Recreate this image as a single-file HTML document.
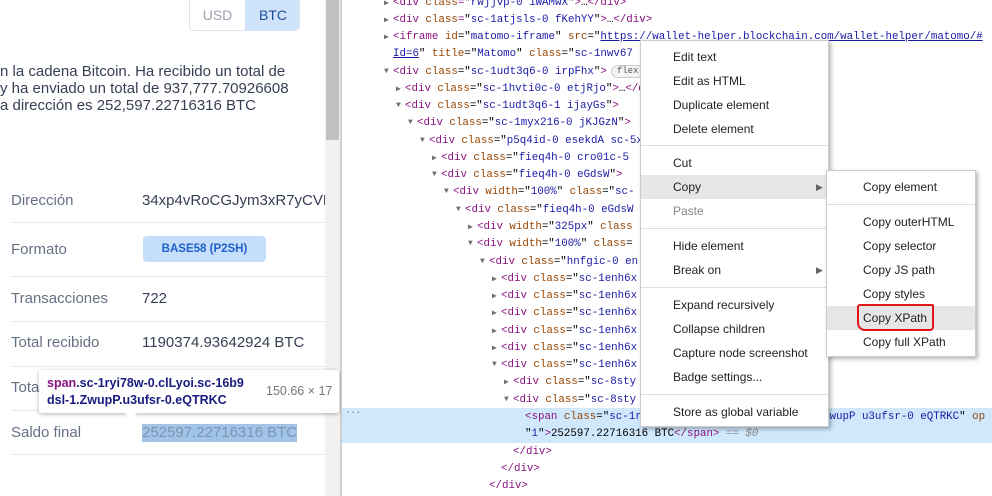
<!DOCTYPE html>
<html><head><meta charset="utf-8"><style>
*{margin:0;padding:0;box-sizing:border-box}
body{width:992px;height:496px;overflow:hidden;background:#fff;position:relative;font-family:"Liberation Sans",sans-serif}
.a{position:absolute}
.lp{color:#353f52;font-size:15px;white-space:nowrap}
.lbl{color:#677184;font-size:15px;position:absolute;left:11px}
.val{color:#353f52;font-size:15px;position:absolute;left:142px;white-space:nowrap}
.hr{position:absolute;left:11px;width:314px;height:1px;background:#e6e8eb}
#dt{position:absolute;left:342px;top:0;width:650px;height:496px;overflow:hidden;font-family:"Liberation Mono",monospace;font-size:10.8px}
.l{position:absolute;white-space:nowrap;height:17px;line-height:17px}
.t{color:#881280}.n{color:#994500}.v{color:#1a1aa6}
.ar{position:absolute;color:#6e6e6e;font-size:8px}
.menu{position:absolute;background:#fff;border:1px solid #ccc;box-shadow:2px 2px 4px rgba(0,0,0,.3);font-family:"Liberation Sans",sans-serif;font-size:12px;color:#222}
.mi{position:absolute;left:0;right:0;height:24px;line-height:24px;white-space:nowrap}
.sep{position:absolute;left:0;right:0;height:1px;background:#ddd}
.flex{display:inline-block;border:1px solid #ccc;border-radius:8px;background:#f3f3f3;color:#555;font-size:9px;padding:0 5px;line-height:11px;margin-left:4px;vertical-align:1px}
</style></head><body>
<!-- left panel -->
<div class="a" style="left:0;top:0;width:325px;height:496px;overflow:hidden">
<div class="a" style="left:189px;top:0;width:111px;height:31px;border:1px solid #dde3ea;border-top:none;border-radius:0 0 5px 5px;overflow:hidden">
 <div class="a" style="left:0;top:0;width:55px;height:31px;color:#98a1ad;font-size:14px;text-align:center;line-height:30px">USD</div>
 <div class="a" style="left:55px;top:0;width:56px;height:31px;background:#cfe3fb;color:#1f4f9c;font-size:14px;text-align:center;line-height:30px">BTC</div>
</div>
<div class="a lp" style="left:0;top:63px;line-height:17px">n la cadena Bitcoin. Ha recibido un total de<br>y ha enviado un total de 937,777.70926608<br>a dirección es 252,597.22716316 BTC</div>
<div class="lbl" style="top:192px">Dirección</div><div class="val" style="top:192px">34xp4vRoCGJym3xR7yCVP</div>
<div class="hr" style="top:222px"></div>
<div class="lbl" style="top:241px">Formato</div>
<div class="a" style="left:143px;top:236px;width:123px;height:26px;background:#c4defb;border-radius:4px;color:#1f5fc9;font-weight:bold;font-size:11.5px;text-align:center;line-height:26px">BASE58 (P2SH)</div>
<div class="hr" style="top:276px"></div>
<div class="lbl" style="top:290px">Transacciones</div><div class="val" style="top:290px">722</div>
<div class="hr" style="top:321px"></div>
<div class="lbl" style="top:334px">Total recibido</div><div class="val" style="top:334px">1190374.93642924 BTC</div>
<div class="hr" style="top:366px"></div>
<div class="lbl" style="top:379px">Total enviado</div>
<div class="hr" style="top:410px"></div>
<div class="lbl" style="top:424px">Saldo final</div>
<div class="a" style="left:142px;top:424px;height:18px;background:#9fc4e7;color:#7f93ad;font-size:15px;line-height:18px;white-space:nowrap">252597.22716316 BTC</div>
<div class="hr" style="top:454px"></div>
</div>
<!-- scrollbar -->
<div class="a" style="left:325px;top:0;width:15px;height:496px;background:#f1f1f1"></div>
<div class="a" style="left:326px;top:0;width:13px;height:140px;background:#c1c1c1"></div>
<div class="a" style="left:340px;top:0;width:2px;height:496px;background:#d0d0d0"></div>
<!-- devtools -->
<div id="dt">
<div class="a" style="left:0;top:408px;width:650px;height:35px;background:#cfe8fc"></div>
<div class="a" style="left:3px;top:408px;color:#777;font-size:9px">···</div>
<div id="code"></div>
</div>
<!-- tooltip -->
<div class="a" style="left:39px;top:370px;width:300px;height:43px;background:#fff;border-radius:3px;box-shadow:0 1px 4px rgba(0,0,0,.3);z-index:5">
 <div class="a" style="left:8px;top:5px;font-size:12.5px;font-weight:bold;color:#1a1a80;line-height:17px;white-space:nowrap"><span style="color:#881280">span</span>.sc-1ryi78w-0.clLyoi.sc-16b9<br>dsl-1.ZwupP.u3ufsr-0.eQTRKC</div>
 <div class="a" style="left:227px;top:14px;font-size:12.5px;color:#777;white-space:nowrap">150.66 × 17</div>
</div>
<div class="a" style="left:124px;top:412px;width:0;height:0;border-left:7px solid transparent;border-right:7px solid transparent;border-top:7px solid #fff;z-index:6"></div>
<script>
var L=[
[0,'▶','<span class=t>&lt;div</span> <span class=n>class</span><span class=t>=</span>"<span class=v>rwjjvp-0 1WAMwX</span>"<span class=t>&gt;</span>…<span class=t>&lt;/div&gt;</span>'],
[0,'▶','<span class=t>&lt;div</span> <span class=n>class</span><span class=t>=</span>"<span class=v>sc-1atjsls-0 fKehYY</span>"<span class=t>&gt;</span>…<span class=t>&lt;/div&gt;</span>'],
[0,'▶','<span class=t>&lt;iframe</span> <span class=n>id</span>="<span class=v>matomo-iframe</span>" <span class=n>src</span>="<span class=v style="text-decoration:underline">https://wallet-helper.blockchain.com/wallet-helper/matomo/#</span>'],
[0,'','<span class=v style="text-decoration:underline">Id=6</span>" <span class=n>title</span>="<span class=v>Matomo</span>" <span class=n>class</span>="<span class=v>sc-1nwv67</span>'],
[0,'▼','<span class=t>&lt;div</span> <span class=n>class</span>="<span class=v>sc-1udt3q6-0 irpFhx</span>"<span class=t>&gt;</span><span class=flex>flex</span>'],
[1,'▶','<span class=t>&lt;div</span> <span class=n>class</span>="<span class=v>sc-1hvti0c-0 etjRjo</span>"<span class=t>&gt;</span>…<span class=t>&lt;/div&gt;</span>'],
[1,'▼','<span class=t>&lt;div</span> <span class=n>class</span>="<span class=v>sc-1udt3q6-1 ijayGs</span>"<span class=t>&gt;</span>'],
[2,'▼','<span class=t>&lt;div</span> <span class=n>class</span>="<span class=v>sc-1myx216-0 jKJGzN</span>"<span class=t>&gt;</span>'],
[3,'▼','<span class=t>&lt;div</span> <span class=n>class</span>="<span class=v>p5q4id-0 esekdA sc-5xxxxxxxxx-x xxxxxx</span>"<span class=t>&gt;</span><span class=flex>flex</span>'],
[4,'▶','<span class=t>&lt;div</span> <span class=n>class</span>="<span class=v>fieq4h-0 cro01c-5</span>'],
[4,'▼','<span class=t>&lt;div</span> <span class=n>class</span>="<span class=v>fieq4h-0 eGdsW</span>"<span class=t>&gt;</span>'],
[5,'▼','<span class=t>&lt;div</span> <span class=n>width</span>="<span class=v>100%</span>" <span class=n>class</span>="<span class=v>sc-</span>'],
[6,'▼','<span class=t>&lt;div</span> <span class=n>class</span>="<span class=v>fieq4h-0 eGdsW</span>'],
[7,'▶','<span class=t>&lt;div</span> <span class=n>width</span>="<span class=v>325px</span>" <span class=n>class</span>'],
[7,'▼','<span class=t>&lt;div</span> <span class=n>width</span>="<span class=v>100%</span>" <span class=n>class</span>='],
[8,'▼','<span class=t>&lt;div</span> <span class=n>class</span>="<span class=v>hnfgic-0 en</span>'],
[9,'▶','<span class=t>&lt;div</span> <span class=n>class</span>="<span class=v>sc-1enh6x</span>'],
[9,'▶','<span class=t>&lt;div</span> <span class=n>class</span>="<span class=v>sc-1enh6x</span>'],
[9,'▶','<span class=t>&lt;div</span> <span class=n>class</span>="<span class=v>sc-1enh6x</span>'],
[9,'▶','<span class=t>&lt;div</span> <span class=n>class</span>="<span class=v>sc-1enh6x</span>'],
[9,'▶','<span class=t>&lt;div</span> <span class=n>class</span>="<span class=v>sc-1enh6x</span>'],
[9,'▼','<span class=t>&lt;div</span> <span class=n>class</span>="<span class=v>sc-1enh6x</span>'],
[10,'▶','<span class=t>&lt;div</span> <span class=n>class</span>="<span class=v>sc-8sty</span>'],
[10,'▼','<span class=t>&lt;div</span> <span class=n>class</span>="<span class=v>sc-8sty</span>'],
[11,'','<span class=t>&lt;span</span> <span class=n>class</span>="<span class=v>sc-1ryi78w-0 clLyoi sc-16b9dsl-1 ZwupP u3ufsr-0 eQTRKC</span>" <span class=n>op</span>'],
[11,'','"<span class=v>1</span>"<span class=t>&gt;</span>252597.22716316 BTC<span class=t>&lt;/span&gt;</span> <span style="color:#888">== <i>$0</i></span>'],
[10,'','<span class=t>&lt;/div&gt;</span>'],
[9,'','<span class=t>&lt;/div&gt;</span>'],
[8,'','<span class=t>&lt;/div&gt;</span>']];
var h='';
for(var i=0;i<L.length;i++){var y=-5.5+17.27*i,x=51+12*L[i][0];
h+='<div class=l style="left:'+x+'px;top:'+y+'px">'+L[i][2]+'</div>';
if(L[i][1])h+='<div class=ar style="left:'+(x-9)+'px;top:'+(y+3)+'px">'+L[i][1]+'</div>';}
document.getElementById('code').innerHTML=h;
</script>
<!-- context menu -->
<div class="menu" style="left:640px;top:40px;width:189px;height:387px">
 <div class="mi" style="top:4px;padding-left:32px">Edit text</div>
 <div class="mi" style="top:28px;padding-left:32px">Edit as HTML</div>
 <div class="mi" style="top:52px;padding-left:32px">Duplicate element</div>
 <div class="mi" style="top:76px;padding-left:32px">Delete element</div>
 <div class="sep" style="top:104px"></div>
 <div class="mi" style="top:110px;padding-left:32px">Cut</div>
 <div class="mi" style="top:134px;padding-left:32px;background:#e6e6e6">Copy<span style="position:absolute;left:175px;font-size:9px;color:#666">▶</span></div>
 <div class="mi" style="top:158px;padding-left:32px;color:#888">Paste</div>
 <div class="sep" style="top:187px"></div>
 <div class="mi" style="top:193px;padding-left:32px">Hide element</div>
 <div class="mi" style="top:217px;padding-left:32px">Break on<span style="position:absolute;left:175px;font-size:9px;color:#666">▶</span></div>
 <div class="sep" style="top:246px"></div>
 <div class="mi" style="top:252px;padding-left:32px">Expand recursively</div>
 <div class="mi" style="top:276px;padding-left:32px">Collapse children</div>
 <div class="mi" style="top:300px;padding-left:32px">Capture node screenshot</div>
 <div class="mi" style="top:324px;padding-left:32px">Badge settings...</div>
 <div class="sep" style="top:353px"></div>
 <div class="mi" style="top:359px;padding-left:32px">Store as global variable</div>
</div>
<div class="menu" style="left:826px;top:170px;width:150px;height:187px">
 <div class="mi" style="top:4px;padding-left:36px">Copy element</div>
 <div class="sep" style="top:33px"></div>
 <div class="mi" style="top:39px;padding-left:36px">Copy outerHTML</div>
 <div class="mi" style="top:63px;padding-left:36px">Copy selector</div>
 <div class="mi" style="top:87px;padding-left:36px">Copy JS path</div>
 <div class="mi" style="top:111px;padding-left:36px">Copy styles</div>
 <div class="mi" style="top:135px;padding-left:36px;background:#e6e6e6">Copy XPath</div>
 <div class="mi" style="top:159px;padding-left:36px">Copy full XPath</div>
</div>
<div class="a" style="left:857px;top:304px;width:77px;height:27px;border:2px solid #e0161b;border-radius:3px 2px 4px 8px"></div>
</body></html>
